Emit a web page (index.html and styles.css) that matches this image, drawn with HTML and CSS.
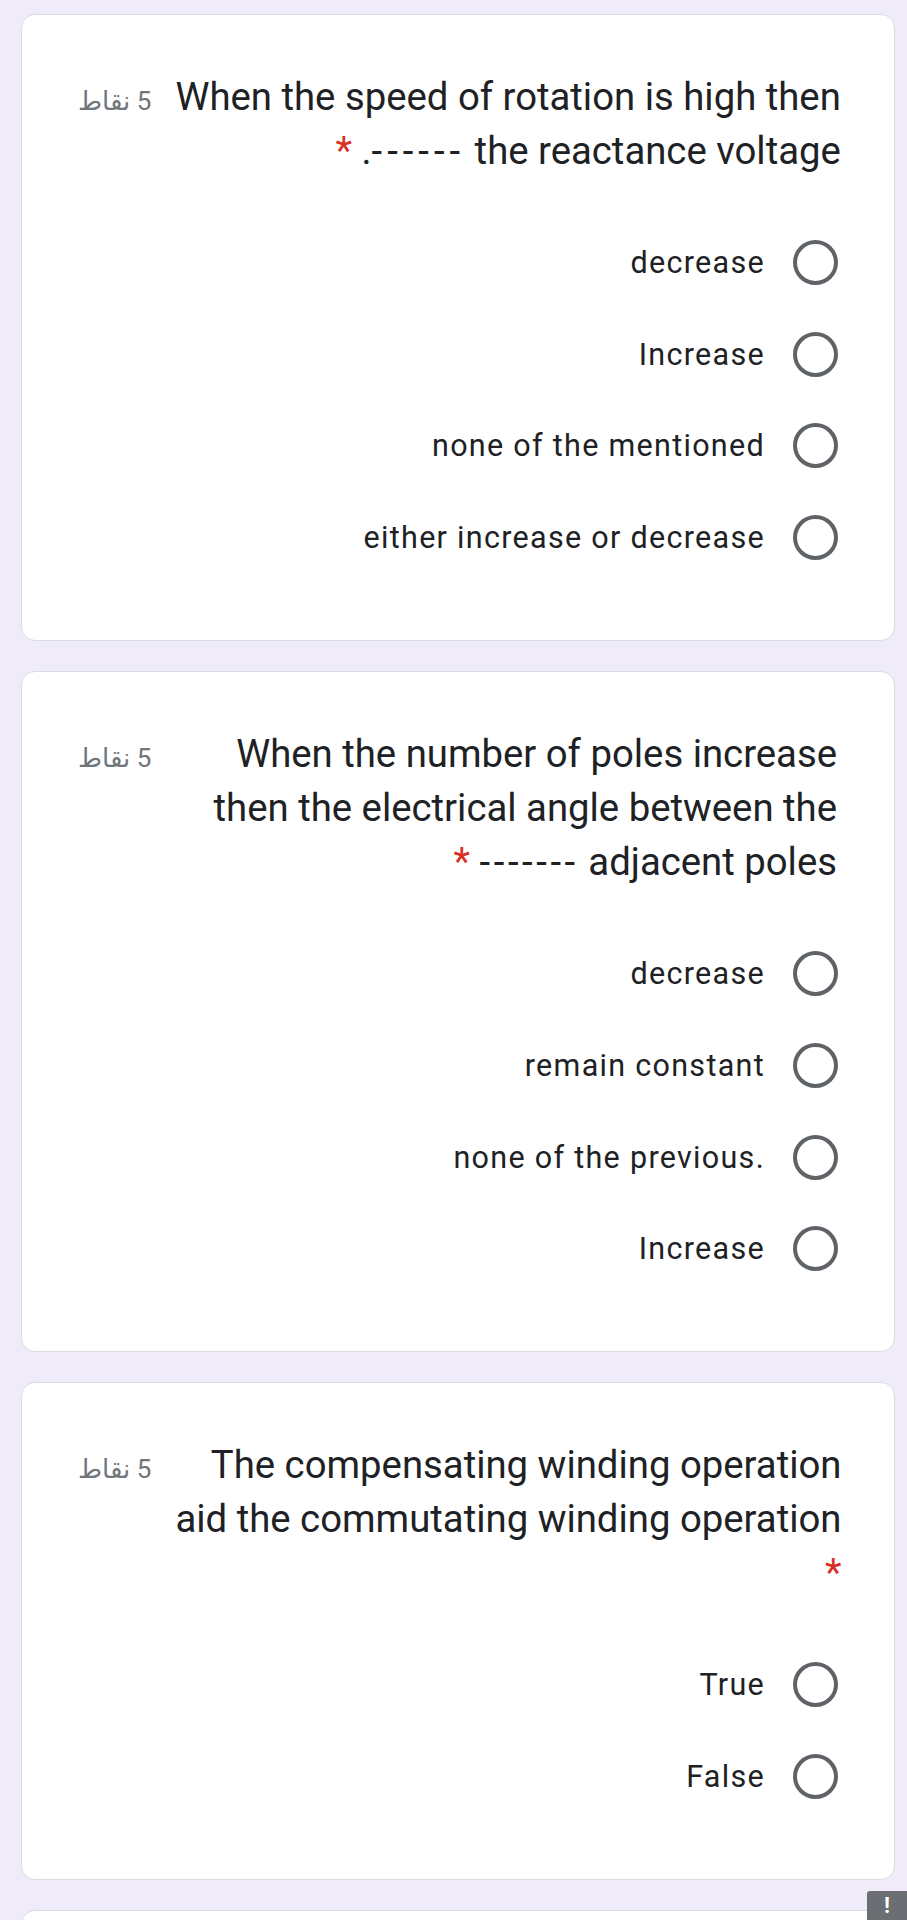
FILE: index.html
```html
<!DOCTYPE html>
<html lang="en">
<head>
<meta charset="utf-8">
<title>Form</title>
<link rel="stylesheet" href="styles.css">
</head>
<body>
<main class="page">
  <section class="card">
    <div class="head">
      <span class="points" dir="rtl">5 نقاط</span>
      <div class="question">When the speed of rotation is high then<br><span class="req">*</span> .<span class="dash dash-a">------</span> the reactance voltage</div>
    </div>
    <ul class="options">
      <li class="option"><span class="label">decrease</span><span class="radio"></span></li>
      <li class="option"><span class="label">Increase</span><span class="radio"></span></li>
      <li class="option"><span class="label">none of the mentioned</span><span class="radio"></span></li>
      <li class="option"><span class="label">either increase or decrease</span><span class="radio"></span></li>
    </ul>
  </section>

  <section class="card">
    <div class="head">
      <span class="points" dir="rtl">5 نقاط</span>
      <div class="question">When the number of poles increase<br>then the electrical angle between the<br><span class="req">*</span> <span class="dash">-------</span> adjacent poles</div>
    </div>
    <ul class="options">
      <li class="option"><span class="label">decrease</span><span class="radio"></span></li>
      <li class="option"><span class="label">remain constant</span><span class="radio"></span></li>
      <li class="option"><span class="label">none of the previous.</span><span class="radio"></span></li>
      <li class="option"><span class="label">Increase</span><span class="radio"></span></li>
    </ul>
  </section>

  <section class="card">
    <div class="head">
      <span class="points" dir="rtl">5 نقاط</span>
      <div class="question">The compensating winding operation<br>aid the commutating winding operation<br><span class="req">*</span></div>
    </div>
    <ul class="options">
      <li class="option"><span class="label">True</span><span class="radio"></span></li>
      <li class="option"><span class="label">False</span><span class="radio"></span></li>
    </ul>
  </section>

  <section class="card card-next"></section>

  <div class="report">!</div>
</main>
</body>
</html>
```
FILE: styles.css
```css
* { box-sizing: border-box; }
html, body {
  margin: 0;
  padding: 0;
  background: #f0ebf8;
}
body {
  font-family: Roboto, "DejaVu Sans", sans-serif;
  color: #202124;
  overflow: hidden;
}
.page {
  position: relative;
  padding: 14px 12px 0 21px;
  display: flex;
  flex-direction: column;
  gap: 30px;
  height: 1920px;
  overflow: hidden;
}
.card {
  background: #fff;
  border: 1px solid #dcdae3;
  border-radius: 14px;
  padding: 54.5px 57px 56.5px 56px;
  flex: none;
}
.card-next {
  height: 60px;
}
.head {
  display: flex;
  align-items: baseline;
  justify-content: space-between;
  gap: 24px;
}
.points {
  font-family: Roboto, "DejaVu Sans", sans-serif;
  font-size: 26px;
  color: #70757a;
  white-space: nowrap;
  flex: none;
}
.question {
  font-size: 38.3px;
  line-height: 54px;
  text-align: right;
  white-space: nowrap;
  flex: 1;
}
.req {
  color: #d93025;
}
.dash {
  letter-spacing: 3.6px;
}
.dash-a {
  letter-spacing: 5px;
}
.options {
  list-style: none;
  margin: 39px 0 0;
  padding: 0;
}
.option {
  height: 91.8px;
  display: flex;
  align-items: center;
  justify-content: flex-end;
  gap: 28px;
}
.label {
  font-size: 30.5px;
  letter-spacing: 1.3px;
  color: #202124;
}
.radio {
  width: 45px;
  height: 45px;
  border: 4.5px solid #5f6368;
  border-radius: 50%;
  flex: none;
  margin-right: -1px;
}
.report {
  position: absolute;
  top: 1891px;
  right: 0;
  width: 40px;
  height: 29px;
  background: #6b6e72;
  color: #fff;
  font-weight: bold;
  font-size: 22px;
  text-align: center;
  line-height: 29px;
  border-radius: 3px 0 0 0;
}
```
